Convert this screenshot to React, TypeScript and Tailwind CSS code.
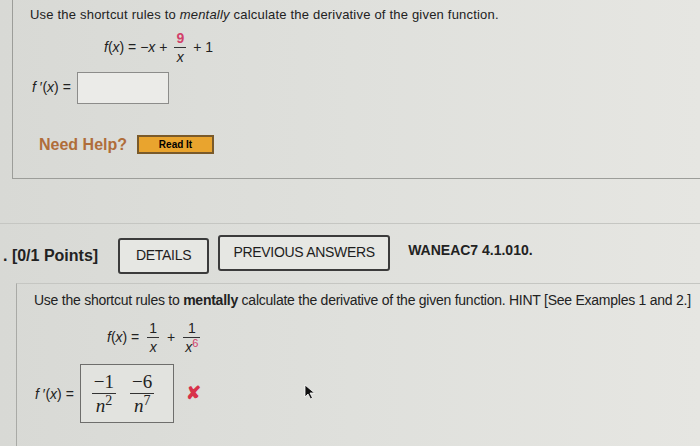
import React from 'react';

const Frac: React.FC<{ num: React.ReactNode; den: React.ReactNode; className?: string }> = ({ num, den, className }) => (
  <span className={`inline-flex flex-col items-center align-middle leading-none ${className ?? ''}`}>
    <span className="px-[2px] pb-[2px]">{num}</span>
    <span className="self-stretch border-t border-[#333]" />
    <span className="px-[2px] pt-[2px]">{den}</span>
  </span>
);

const App: React.FC = () => {
  return (
    <div className="w-[700px] h-[446px] overflow-hidden bg-gradient-to-r from-[#d8d9d5] via-[#dfe0dc] to-[#e6e6e2] text-[#222] font-['Liberation_Sans',Arial,sans-serif]">
      {/* previous question panel */}
      <div className="ml-[12px] h-[179px] border-l border-b border-[#9c9d99] pl-[17px] pt-[5px]">
        <p className="text-[13px] tracking-[0.2px]">
          Use the shortcut rules to <i>mentally</i> calculate the derivative of the given function.
        </p>
        <div className="ml-[74px] mt-[6px] flex items-center gap-[7px] text-[14px]">
          <span>
            <i>f</i>(<i>x</i>) = −<i>x</i> +
          </span>
          <Frac num={<span className="text-[#d2406a] font-bold">9</span>} den={<i>x</i>} />
          <span>+ 1</span>
        </div>
        <div className="mt-[8px] flex items-center gap-[6px]">
          <span className="text-[14px] ml-[2px]">
            <i>f</i> ′(<i>x</i>) =
          </span>
          <div className="w-[92px] h-[32px] border border-[#8c8c8a] bg-[#ebebe8]" />
        </div>
        <div className="mt-[29px] ml-[9px] flex items-center gap-[10px]">
          <span className="text-[16px] font-bold text-[#b06d3a]">Need Help?</span>
          <button className="w-[77px] h-[19px] border-2 border-[#7a5a2a] bg-[#e9a42e] text-[10px] font-bold text-black leading-none">
            Read It
          </button>
        </div>
      </div>

      {/* current question */}
      <div className="mt-[44px] border-t border-[#c5c6c2]">
        <div className="flex items-center h-[57px] pt-[6px]">
          <span className="ml-[3px] text-[16px] font-bold whitespace-nowrap">. [0/1 Points]</span>
          <button className="ml-[20px] w-[91px] h-[36px] rounded-[3px] border-2 border-[#3b3b3b] bg-[#e6e7e3] text-[14px] tracking-[-0.3px] text-[#1d1d1d]">
            DETAILS
          </button>
          <button className="ml-[9px] -mt-[6px] w-[172px] h-[36px] rounded-[3px] border-2 border-[#3b3b3b] bg-[#e6e7e3] text-[14px] tracking-[-0.3px] text-[#1d1d1d]">
            PREVIOUS ANSWERS
          </button>
          <span className="ml-[18px] -mt-[10px] text-[14px] font-bold">WANEAC7 4.1.010.</span>
        </div>
        <div className="mt-[2px] border-t border-[#c5c6c2] ml-[16px] border-l border-l-[#a9aaa6] pl-[17px] pt-[6px] h-[200px]">
          <p className="text-[14px] tracking-[-0.25px] whitespace-nowrap">
            Use the shortcut rules to <b>mentally</b> calculate the derivative of the given function. HINT [See Examples 1 and 2.]
          </p>
          <div className="ml-[73px] mt-[10px] flex items-center gap-[8px] text-[14px]">
            <span>
              <i>f</i>(<i>x</i>) =
            </span>
            <Frac num="1" den={<i>x</i>} />
            <span>+</span>
            <Frac
              num="1"
              den={
                <span>
                  <i>x</i>
                  <sup className="text-[#d2406a] text-[11px]">6</sup>
                </span>
              }
            />
          </div>
          <div className="mt-[10px] flex items-center">
            <span className="text-[14px] ml-[1px] mt-[1px]">
              <i>f</i> ′(<i>x</i>) =
            </span>
            <div className="ml-[6px] w-[94px] h-[59px] border border-[#6e6e6c] bg-[#e2e3df] flex items-center pl-[11px] gap-[14px] font-['Liberation_Serif',serif] text-[19px]">
              <Frac num="−1" den={<span><i>n</i><sup className="text-[14px]">2</sup></span>} />
              <Frac num="−6" den={<span><i>n</i><sup className="text-[14px]">7</sup></span>} />
            </div>
            <span className="ml-[12px] text-[#d8324a] text-[18px] font-bold">✘</span>
            <svg className="ml-[103px] -mt-[4px]" width="12" height="16" viewBox="0 0 12 16">
              <path d="M1 1 L1 13 L4 10 L6.5 15 L8.5 14 L6 9 L10.5 9 Z" fill="#111" stroke="#fff" strokeWidth="0.8" />
            </svg>
          </div>
        </div>
      </div>
    </div>
  );
};

export default App;
